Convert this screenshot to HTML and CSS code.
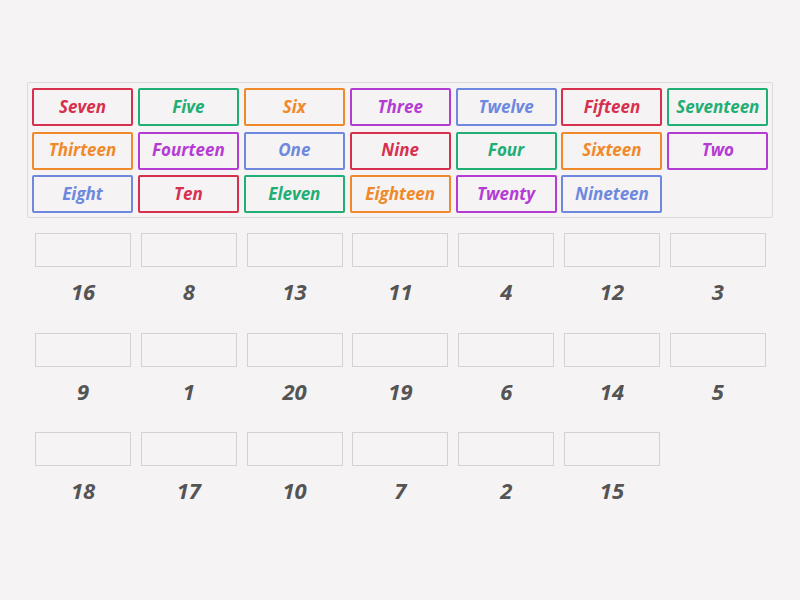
FILE: index.html
```html
<!DOCTYPE html>
<html>
<head>
<meta charset="utf-8">
<link rel="stylesheet" href="styles.css">
</head>
<body>
<div class="page">
  <div class="bank">
    <div class="card red">Seven</div>
    <div class="card green">Five</div>
    <div class="card orange">Six</div>
    <div class="card purple">Three</div>
    <div class="card blue">Twelve</div>
    <div class="card red">Fifteen</div>
    <div class="card green">Seventeen</div>
    <div class="card orange">Thirteen</div>
    <div class="card purple">Fourteen</div>
    <div class="card blue">One</div>
    <div class="card red">Nine</div>
    <div class="card green">Four</div>
    <div class="card orange">Sixteen</div>
    <div class="card purple">Two</div>
    <div class="card blue">Eight</div>
    <div class="card red">Ten</div>
    <div class="card green">Eleven</div>
    <div class="card orange">Eighteen</div>
    <div class="card purple">Twenty</div>
    <div class="card blue">Nineteen</div>
  </div>
  <div class="drops">
    <div class="slot"><div class="box"></div><div class="num">16</div></div>
    <div class="slot"><div class="box"></div><div class="num">8</div></div>
    <div class="slot"><div class="box"></div><div class="num">13</div></div>
    <div class="slot"><div class="box"></div><div class="num">11</div></div>
    <div class="slot"><div class="box"></div><div class="num">4</div></div>
    <div class="slot"><div class="box"></div><div class="num">12</div></div>
    <div class="slot"><div class="box"></div><div class="num">3</div></div>
    <div class="slot"><div class="box"></div><div class="num">9</div></div>
    <div class="slot"><div class="box"></div><div class="num">1</div></div>
    <div class="slot"><div class="box"></div><div class="num">20</div></div>
    <div class="slot"><div class="box"></div><div class="num">19</div></div>
    <div class="slot"><div class="box"></div><div class="num">6</div></div>
    <div class="slot"><div class="box"></div><div class="num">14</div></div>
    <div class="slot"><div class="box"></div><div class="num">5</div></div>
    <div class="slot"><div class="box"></div><div class="num">18</div></div>
    <div class="slot"><div class="box"></div><div class="num">17</div></div>
    <div class="slot"><div class="box"></div><div class="num">10</div></div>
    <div class="slot"><div class="box"></div><div class="num">7</div></div>
    <div class="slot"><div class="box"></div><div class="num">2</div></div>
    <div class="slot"><div class="box"></div><div class="num">15</div></div>
  </div>
</div>
</body>
</html>
```
FILE: styles.css
```css
html, body {
  margin: 0;
  padding: 0;
  background: #f5f3f3;
}
body {
  width: 800px;
  height: 600px;
  overflow: hidden;
  font-family: "Open Sans", "DejaVu Sans", sans-serif;
}
.page {
  padding: 82px 27px 0 27px;
}
.bank {
  display: grid;
  grid-template-columns: repeat(7, 101px);
  column-gap: 4.9px;
  row-gap: 5.5px;
  border: 1px solid #dcdadb;
  border-radius: 2px;
  padding: 5px 4px 4px 4px;
  width: 736px;
  height: 125px;
}
.card {
  box-sizing: border-box;
  height: 38px;
  padding-bottom: 2px;
  border: 2px solid currentColor;
  border-radius: 2px;
  display: flex;
  align-items: center;
  justify-content: center;
  font-size: 17px;
  font-weight: 700;
  font-style: italic;
}
.red { color: #d7304f; }
.green { color: #1fae74; }
.orange { color: #f0892a; }
.purple { color: #b43cd3; }
.blue { color: #6d88de; }
.drops {
  display: grid;
  grid-template-columns: repeat(7, 96px);
  column-gap: 9.8px;
  margin: 15px 0 0 8px;
}
.slot {
  height: 99.5px;
}
.box {
  box-sizing: border-box;
  height: 34px;
  border: 1px solid #d4d2d2;
}
.num {
  margin-top: 9px;
  height: 30px;
  line-height: 30px;
  text-align: center;
  font-size: 22px;
  font-weight: 700;
  font-style: italic;
  color: #555455;
}
```
